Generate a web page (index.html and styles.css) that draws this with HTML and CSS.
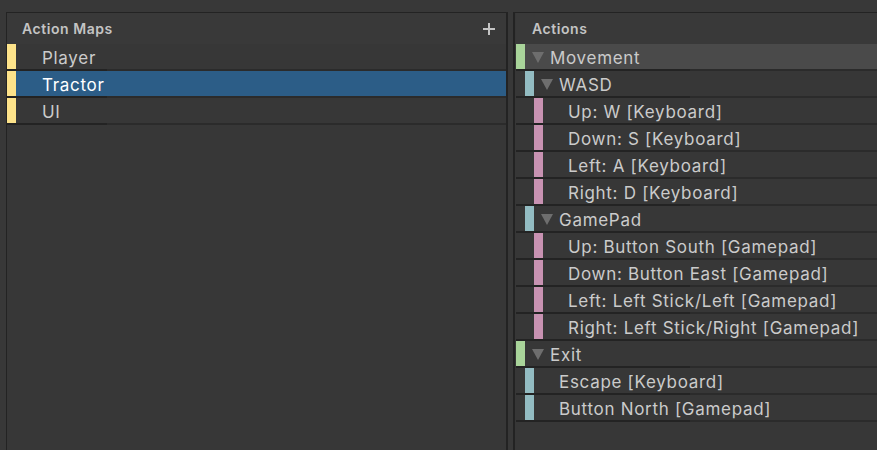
FILE: index.html
```html
<!DOCTYPE html>
<html lang="en">
<head>
    <meta charset="UTF-8">
    <title>Input Actions</title>
    <link rel="stylesheet" href="styles.css">
</head>
<body>
    <div class="window">
        <div class="panel maps">
            <div class="panel-header">
                <span>Action Maps</span>
                <svg class="add" width="12" height="12" viewBox="0 0 12 12">
                    <path d="M6 0V12M0 6H12" stroke="#c4c4c4" stroke-width="2"/>
                </svg>
            </div>
            <div class="row map"><span class="bar yellow"></span><span class="label">Player</span></div>
            <div class="row map selected"><span class="bar yellow"></span><span class="label">Tractor</span></div>
            <div class="row map"><span class="bar yellow"></span><span class="label">UI</span></div>
        </div>
        <div class="panel actions">
            <div class="panel-header">
                <span>Actions</span>
            </div>
            <div class="row hover"><span class="bar green"></span><span class="arrow"></span><span class="label">Movement</span></div>
            <div class="row lvl1"><span class="bar blue"></span><span class="arrow"></span><span class="label">WASD</span></div>
            <div class="row lvl2"><span class="bar pink"></span><span class="label leaf">Up: W [Keyboard]</span></div>
            <div class="row lvl2"><span class="bar pink"></span><span class="label leaf">Down: S [Keyboard]</span></div>
            <div class="row lvl2"><span class="bar pink"></span><span class="label leaf">Left: A [Keyboard]</span></div>
            <div class="row lvl2"><span class="bar pink"></span><span class="label leaf">Right: D [Keyboard]</span></div>
            <div class="row lvl1"><span class="bar blue"></span><span class="arrow"></span><span class="label">GamePad</span></div>
            <div class="row lvl2"><span class="bar pink"></span><span class="label leaf">Up: Button South [Gamepad]</span></div>
            <div class="row lvl2"><span class="bar pink"></span><span class="label leaf">Down: Button East [Gamepad]</span></div>
            <div class="row lvl2"><span class="bar pink"></span><span class="label leaf">Left: Left Stick/Left [Gamepad]</span></div>
            <div class="row lvl2"><span class="bar pink"></span><span class="label leaf">Right: Left Stick/Right [Gamepad]</span></div>
            <div class="row"><span class="bar green"></span><span class="arrow"></span><span class="label">Exit</span></div>
            <div class="row lvl1"><span class="bar blue"></span><span class="label leaf">Escape [Keyboard]</span></div>
            <div class="row lvl1"><span class="bar blue"></span><span class="label leaf">Button North [Gamepad]</span></div>
        </div>
    </div>
</body>
</html>
```

FILE: styles.css
```css
body {
    margin: 0;
    background: #383838;
    font-family: Inter, 'Noto Sans', sans-serif;
    color: #cbcbcb;
}
.window {
    display: flex;
    gap: 5px;
    height: 450px;
    padding: 12px 0 0 6px;
    box-sizing: border-box;
    overflow: hidden;
}
.panel {
    display: flex;
    flex-direction: column;
    background: #373737;
    border-top: 1px solid #232323;
    border-left: 1px solid #232323;
}
.maps {
    width: 499px;
    border-right: 2px solid #232323;
    --sep: 100px;
}
.actions {
    flex: 1;
    border-left-width: 2px;
    padding-left: 1px;
    --sep: 174px;
}
.panel-header {
    display: flex;
    align-items: center;
    justify-content: space-between;
    height: 31px;
    padding: 0 11px 0 15px;
    background: #393939;
    font-size: 14px;
    font-weight: 600;
    letter-spacing: 0.55px;
    color: #c4c4c4;
}
.actions .panel-header {
    padding-left: 16px;
}
.row {
    display: flex;
    align-items: center;
    height: 25px;
    padding-bottom: 2px;
    font-size: 17px;
    letter-spacing: 0.7px;
    background:
        linear-gradient(#232323, #232323) no-repeat left bottom / var(--sep) 2px,
        linear-gradient(#2b2b2b, #2b2b2b) no-repeat left bottom / 100% 2px;
    white-space: nowrap;
}
.row.selected {
    background:
        linear-gradient(#232323, #232323) no-repeat left bottom / var(--sep) 2px,
        linear-gradient(#2b2b2b, #2b2b2b) no-repeat left bottom / 100% 2px,
        linear-gradient(#2c5d87, #2c5d87) no-repeat left top / 100% 25px;
    color: #fff;
}
.row.hover {
    background:
        linear-gradient(#232323, #232323) no-repeat left bottom / var(--sep) 2px,
        linear-gradient(#2b2b2b, #2b2b2b) no-repeat left bottom / 100% 2px,
        linear-gradient(#4a4a4a, #4a4a4a) no-repeat left top / 100% 25px;
}
.label {
    padding-top: 2px;
}
.bar {
    flex: none;
    width: 9px;
    height: 25px;
}
.lvl1 { padding-left: 9px; }
.lvl2 { padding-left: 18px; }
.yellow { background: #fde38a; }
.green { background: #a9d49a; }
.blue { background: #93bcc2; }
.pink { background: #c892b2; }
.arrow {
    flex: none;
    width: 0;
    height: 0;
    margin: 1px 6px 0 7px;
    border-left: 6px solid transparent;
    border-right: 6px solid transparent;
    border-top: 11px solid #6e6e6e;
}
.map .label {
    margin-left: 26px;
}
.leaf {
    margin-left: 25px;
}
```
